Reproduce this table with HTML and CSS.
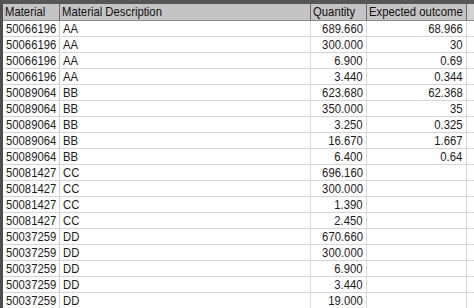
FILE: index.html
```
<!DOCTYPE html>
<html lang="en">

<head>
    <meta charset="UTF-8">
    <title>Material quantities</title>
    <link rel="stylesheet" href="styles.css">
</head>

<body>
    <div class="sheet">
        <table class="grid">
            <colgroup>
                <col class="c-mat">
                <col class="c-desc">
                <col class="c-qty">
                <col class="c-out">
                <col class="c-rest">
            </colgroup>
            <thead>
                <tr>
                    <th><span>Material</span></th>
                    <th><span>Material Description</span></th>
                    <th><span>Quantity</span></th>
                    <th><span>Expected outcome</span></th>
                    <th class="rest"></th>
                </tr>
            </thead>
            <tbody>
                <tr><td><span>50066196</span></td><td><span>AA</span></td><td class="num"><span>689.660</span></td><td class="num"><span>68.966</span></td><td></td></tr>
                <tr><td><span>50066196</span></td><td><span>AA</span></td><td class="num"><span>300.000</span></td><td class="num"><span>30</span></td><td></td></tr>
                <tr><td><span>50066196</span></td><td><span>AA</span></td><td class="num"><span>6.900</span></td><td class="num"><span>0.69</span></td><td></td></tr>
                <tr><td><span>50066196</span></td><td><span>AA</span></td><td class="num"><span>3.440</span></td><td class="num"><span>0.344</span></td><td></td></tr>
                <tr><td><span>50089064</span></td><td><span>BB</span></td><td class="num"><span>623.680</span></td><td class="num"><span>62.368</span></td><td></td></tr>
                <tr><td><span>50089064</span></td><td><span>BB</span></td><td class="num"><span>350.000</span></td><td class="num"><span>35</span></td><td></td></tr>
                <tr><td><span>50089064</span></td><td><span>BB</span></td><td class="num"><span>3.250</span></td><td class="num"><span>0.325</span></td><td></td></tr>
                <tr><td><span>50089064</span></td><td><span>BB</span></td><td class="num"><span>16.670</span></td><td class="num"><span>1.667</span></td><td></td></tr>
                <tr><td><span>50089064</span></td><td><span>BB</span></td><td class="num"><span>6.400</span></td><td class="num"><span>0.64</span></td><td></td></tr>
                <tr><td><span>50081427</span></td><td><span>CC</span></td><td class="num"><span>696.160</span></td><td></td><td></td></tr>
                <tr><td><span>50081427</span></td><td><span>CC</span></td><td class="num"><span>300.000</span></td><td></td><td></td></tr>
                <tr><td><span>50081427</span></td><td><span>CC</span></td><td class="num"><span>1.390</span></td><td></td><td></td></tr>
                <tr><td><span>50081427</span></td><td><span>CC</span></td><td class="num"><span>2.450</span></td><td></td><td></td></tr>
                <tr><td><span>50037259</span></td><td><span>DD</span></td><td class="num"><span>670.660</span></td><td></td><td></td></tr>
                <tr><td><span>50037259</span></td><td><span>DD</span></td><td class="num"><span>300.000</span></td><td></td><td></td></tr>
                <tr><td><span>50037259</span></td><td><span>DD</span></td><td class="num"><span>6.900</span></td><td></td><td></td></tr>
                <tr><td><span>50037259</span></td><td><span>DD</span></td><td class="num"><span>3.440</span></td><td></td><td></td></tr>
                <tr><td><span>50037259</span></td><td><span>DD</span></td><td class="num"><span>19.000</span></td><td></td><td></td></tr>
            </tbody>
        </table>
    </div>
</body>

</html>
```

FILE: styles.css
```
* {
    margin: 0;
    padding: 0;
    box-sizing: border-box;
}

body {
    font-family: 'Liberation Sans', Arial, sans-serif;
    background-color: #ffffff;
    color: #1c1c1c;
    overflow: hidden;
}

.sheet {
    width: 474px;
    height: 308px;
    border-top: 4px solid #565656;
    border-left: 3px solid #4e4e4e;
    overflow: hidden;
}

.grid {
    border-collapse: collapse;
    table-layout: fixed;
    width: 471px;
    font-size: 13px;
}

.c-mat { width: 56px; }
.c-desc { width: 251px; }
.c-qty { width: 56px; }
.c-out { width: 100px; }
.c-rest { width: 8px; }

th {
    height: 16px;
    background-color: #c4c4c4;
    font-weight: normal;
    text-align: left;
    color: #111;
    border-right: 1px solid #6a6a6a;
    border-bottom: 1px solid #8a8a8a;
    padding: 0 0 0 2px;
    white-space: nowrap;
    overflow: hidden;
}

th.rest {
    background-color: #d2d2d2;
    border-right: none;
}

td {
    height: 15.7px;
    border-bottom: 1px solid #d6d6d6;
    border-right: 1px solid #d8d8d8;
    padding: 0 0 0 3px;
    white-space: nowrap;
    overflow: hidden;
}

td:first-child {
    border-right-color: #c9d3c9;
}

td:last-child {
    border-right: none;
}

th span,
td span {
    display: inline-block;
    transform: scaleX(0.87);
    transform-origin: left center;
}

td.num {
    text-align: right;
    padding: 0 3px 0 0;
}

td.num span {
    transform-origin: right center;
}
```
